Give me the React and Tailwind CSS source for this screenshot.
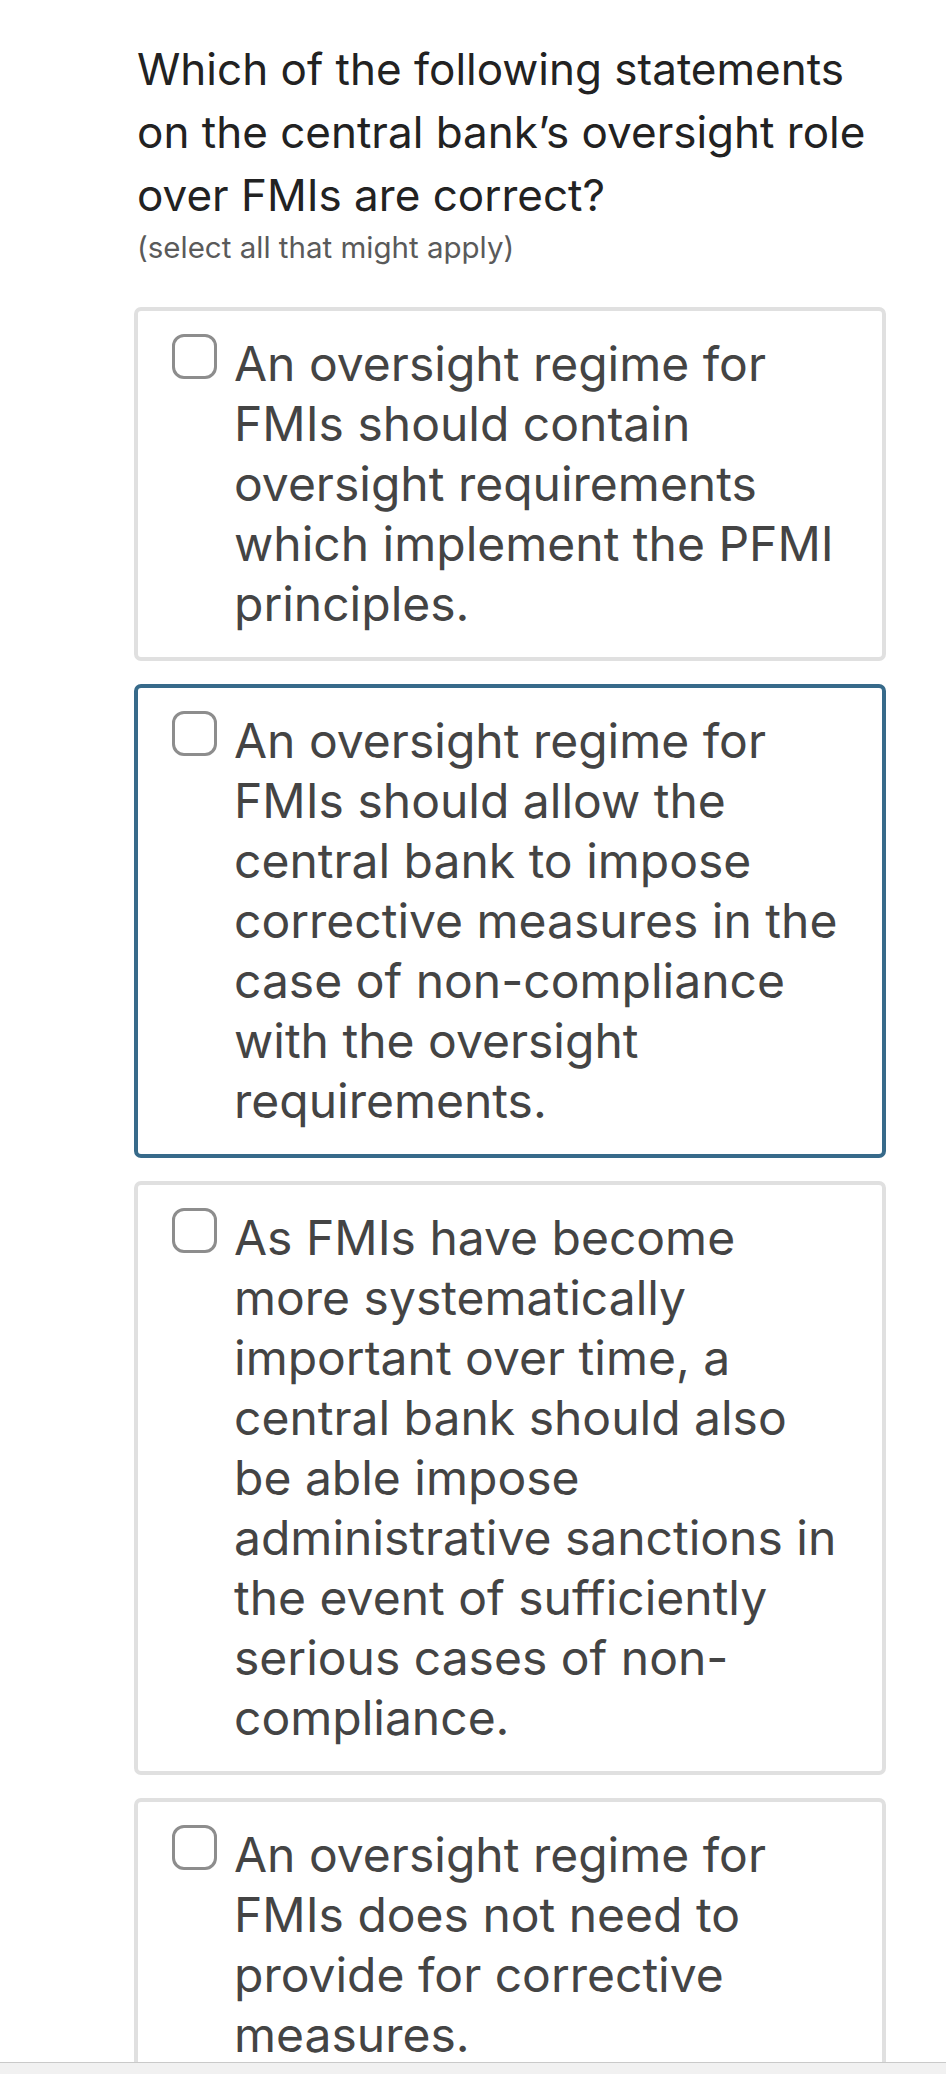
import React from "react";

const options = [
	{
		id: 1,
		text: "An oversight regime for FMIs should contain oversight requirements which implement the PFMI principles.",
	},
	{
		id: 2,
		text: "An oversight regime for FMIs should allow the central bank to impose corrective measures in the case of non-compliance with the oversight requirements.",
		focused: true,
	},
	{
		id: 3,
		text: "As FMIs have become more systematically important over time, a central bank should also be able impose administrative sanctions in the event of sufficiently serious cases of non-compliance.",
	},
	{
		id: 4,
		text: "An oversight regime for FMIs does not need to provide for corrective measures.",
	},
];

const Option = ({ option }) => {
	return (
		<label
			className={
				option.focused
					? "flex items-start gap-[17px] rounded-[7px] border-[4px] border-[#376a8a] bg-white pl-[34px] pr-[30px] py-[23px]"
					: "flex items-start gap-[17px] rounded-[7px] border-[4px] border-[#e0e0e0] bg-white pl-[34px] pr-[30px] py-[23px]"
			}
		>
			<span className="h-[45px] w-[45px] shrink-0 rounded-[12px] border-[3px] border-[#8d8d8d] bg-white"></span>
			<span className="text-[48px] leading-[60px] text-[#444444]">{option.text}</span>
		</label>
	);
};

const App = () => {
	return (
		<div
			className="flex h-[2074px] w-[946px] flex-col overflow-hidden bg-white"
			style={{ fontFamily: "Inter, 'Noto Sans', sans-serif" }}
		>
			<div className="flex-1 overflow-hidden">
				<div className="ml-[134px] w-[752px] pt-[38px]">
					<h1 className="pl-[3px] text-[44px] leading-[63px] font-normal text-[#222222]">
						Which of the following statements on the central bank’s oversight role over FMIs are correct?
					</h1>
					<p className="pl-[3px] text-[29.5px] leading-[40px] text-[#5a5a5a]">(select all that might apply)</p>
					<div className="mt-[40px] flex flex-col gap-[23px]">
						{options.map((option) => (
							<Option key={option.id} option={option} />
						))}
					</div>
				</div>
			</div>
			<div className="h-[12px] shrink-0 border-t border-[#c9c9c9] bg-[#f1f1f1]"></div>
		</div>
	);
};

export default App;
